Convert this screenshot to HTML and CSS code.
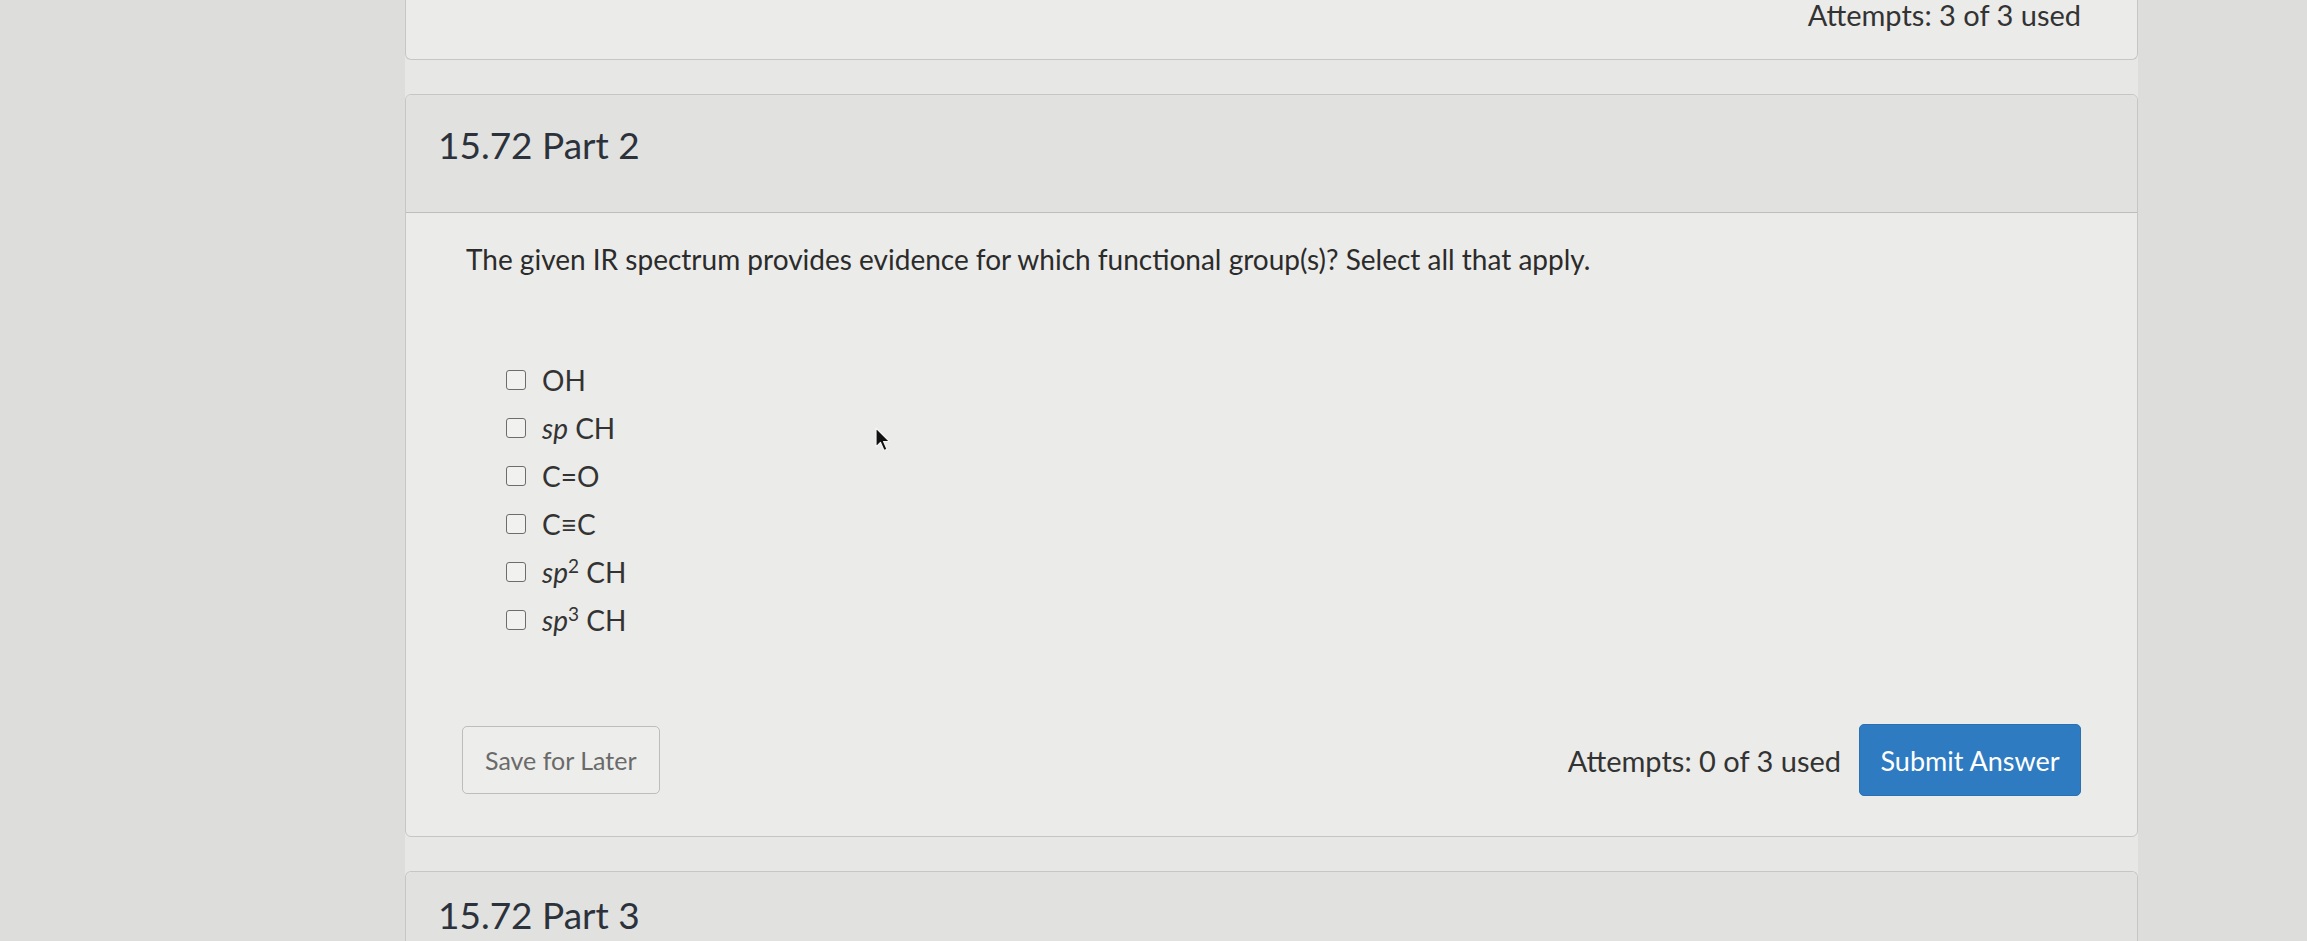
FILE: index.html
```html
<!DOCTYPE html>
<html lang="en">
<head>
<meta charset="utf-8">
<title>15.72 Part 2</title>
<link rel="stylesheet" href="styles.css">
</head>
<body>
<div class="page">
  <section class="card card-top">
    <div class="attempts-top">Attempts: 3 of 3 used</div>
  </section>

  <section class="card">
    <header class="card-head"><h2>15.72 Part 2</h2></header>
    <div class="card-body">
      <p class="question">The given IR spectrum provides evidence for which functional group(s)? Select all that apply.</p>
      <ul class="options">
        <li><span class="box"></span><span class="label">OH</span></li>
        <li><span class="box"></span><span class="label"><i>sp</i> CH</span></li>
        <li><span class="box"></span><span class="label">C=O</span></li>
        <li><span class="box"></span><span class="label">C≡C</span></li>
        <li><span class="box"></span><span class="label"><i>sp</i><sup>2</sup> CH</span></li>
        <li><span class="box"></span><span class="label"><i>sp</i><sup>3</sup> CH</span></li>
      </ul>
      <div class="actions">
        <button class="btn btn-save">Save for Later</button>
        <div class="submit-group">
          <span class="attempts">Attempts: 0 of 3 used</span>
          <button class="btn btn-submit">Submit Answer</button>
        </div>
      </div>
    </div>
  </section>

  <section class="card card-next">
    <header class="card-head card-head-next"><h2>15.72 Part 3</h2></header>
  </section>
</div>
<svg class="cursor" width="18" height="26" viewBox="0 0 18 26" aria-hidden="true">
  <path d="M1 1 L1 20 L5.5 15.5 L9 23.5 L12 22.2 L8.6 14.5 L14.5 14.5 Z" fill="#111" stroke="#f4f4f4" stroke-width="1.2" stroke-linejoin="round"/>
</svg>
</body>
</html>
```

FILE: styles.css
```css
html, body {
  margin: 0;
  padding: 0;
}

body {
  width: 2307px;
  height: 941px;
  overflow: hidden;
  background: #dddddb;
  font-family: Lato, "Liberation Sans", sans-serif;
  color: #2f2f2f;
  position: relative;
}

.page {
  margin-left: 405px;
  width: 1733px;
  min-height: 941px;
  background: #e7e7e5;
  display: flex;
  flex-direction: column;
  gap: 34px;
}

.card {
  background: #ebebe9;
  border: 1px solid #c6c6c4;
  border-radius: 6px;
  box-sizing: border-box;
}

.card-top {
  height: 60px;
  border-top: none;
  border-radius: 0 0 6px 6px;
  display: flex;
  justify-content: flex-end;
  align-items: flex-start;
  padding-right: 56px;
}

.attempts-top {
  font-size: 29px;
  line-height: 30px;
  color: #333;
}

.card-head {
  height: 118px;
  box-sizing: border-box;
  background: #e1e1df;
  border-bottom: 1px solid #bdbdbb;
  border-radius: 6px 6px 0 0;
  padding: 28px 0 0 32px;
}

.card-head-next {
  padding-top: 21px;
}

.card-head h2 {
  margin: 0;
  font-size: 37px;
  line-height: 44px;
  font-weight: 400;
  color: #2c323b;
}

.card-next {
  flex: 1;
  border-bottom: none;
  border-radius: 6px 6px 0 0;
}

.card-body {
  padding: 28px 56px 40px 56px;
}

.question {
  margin: 0;
  padding-left: 4px;
  font-size: 28px;
  line-height: 36px;
  color: #2b2b2b;
}

.options {
  list-style: none;
  margin: 79px 0 0 44px;
  padding: 0;
}

.options li {
  height: 48px;
  display: flex;
  align-items: center;
  gap: 16px;
}

.box {
  width: 18px;
  height: 18px;
  border: 1.5px solid #6d6d6d;
  border-radius: 3px;
  background: #f1f1ef;
  flex: none;
}

.label {
  font-size: 28px;
  line-height: 34px;
  color: #333;
}

.label i {
  font-style: italic;
}

.label sup {
  font-size: 19px;
  line-height: 0;
  vertical-align: 10px;
}

.actions {
  margin-top: 80px;
  display: flex;
  justify-content: space-between;
  align-items: center;
}

.btn {
  font-family: Lato, "Liberation Sans", sans-serif;
  box-sizing: border-box;
  border-radius: 5px;
  cursor: pointer;
}

.btn-save {
  height: 68px;
  padding: 0 22px;
  font-size: 25px;
  color: #6a6a6a;
  background: #ededeb;
  border: 1.5px solid #bdbdbb;
}

.submit-group {
  display: flex;
  align-items: center;
  gap: 18px;
}

.attempts {
  font-size: 29px;
  color: #333;
}

.btn-submit {
  height: 72px;
  width: 222px;
  font-size: 27px;
  color: #fff;
  background: #2e7bc2;
  border: 1px solid #2a70b2;
}

.cursor {
  position: absolute;
  left: 875px;
  top: 427px;
}
```
